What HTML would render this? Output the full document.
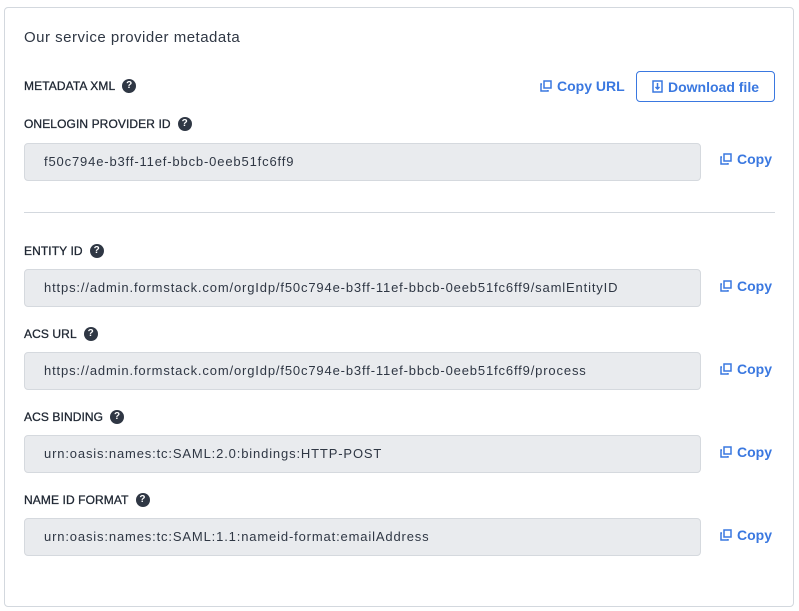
<!DOCTYPE html>
<html><head><style>
*{box-sizing:border-box;margin:0;padding:0}
body{width:799px;height:611px;background:#fff;font-family:"Liberation Sans",sans-serif;position:relative;overflow:hidden;color:#2d3440}
.card{position:absolute;left:4px;top:7px;width:790px;height:600px;border:1px solid #d3d8de;border-radius:4px}
.a{position:absolute}
.title{left:24px;top:29px;font-size:15px;color:#2f3744;letter-spacing:0.5px}
.lbl{font-size:12px;color:#1f2733;display:flex;align-items:center;letter-spacing:.1px;-webkit-text-stroke:0.3px #1f2733}
.q{display:inline-block;width:14px;height:14px;border-radius:50%;background:#2f3744;color:#fff;font-size:10px;font-weight:bold;text-align:center;line-height:14px;margin-left:7px;-webkit-text-stroke:0}
.inp{left:24px;width:677px;height:38px;background:#e9ebee;border:1px solid #d5d9de;border-radius:4px;font-size:13px;line-height:36px;padding-left:19px;color:#2f3744;letter-spacing:0.85px;white-space:nowrap}
.cp{color:#3a78e0;font-weight:bold;font-size:14px;display:flex;align-items:center}
.cp svg{margin-right:5px}
.btn{left:636px;top:71px;width:139px;height:31px;border:1px solid #3a78e0;border-radius:4px;justify-content:center}
.hr{left:24px;top:212px;width:751px;height:1px;background:#d3d8de}
</style></head><body>
<div class="card"></div>
<div class="a title">Our service provider metadata</div>
<div class="a lbl" style="left:24px;top:79px">METADATA XML<span class="q">?</span></div>
<div class="a cp" style="left:540px;top:78px"><svg width="12" height="12" viewBox="0 0 12 12" fill="none" stroke="#3a78e0" stroke-width="1.5"><rect x="4" y="1" width="7" height="7"/><path d="M2 4H1v7h7v-1"/></svg>Copy URL</div>
<div class="a cp btn"><svg width="11" height="13" viewBox="0 0 11 13" fill="none" stroke="#3a78e0" stroke-width="1.5"><rect x="1" y="1" width="9" height="11"/><path d="M5.5 3v6M3.5 7l2 2 2-2"/></svg>Download file</div>
<div class="a lbl" style="left:24px;top:117px">ONELOGIN PROVIDER ID<span class="q">?</span></div>
<div class="a inp" style="top:143px">f50c794e-b3ff-11ef-bbcb-0eeb51fc6ff9</div>
<div class="a cp" style="left:720px;top:151px"><svg width="12" height="12" viewBox="0 0 12 12" fill="none" stroke="#3a78e0" stroke-width="1.5"><rect x="4" y="1" width="7" height="7"/><path d="M2 4H1v7h7v-1"/></svg>Copy</div>
<div class="a hr"></div>
<div class="a lbl" style="left:24px;top:244px">ENTITY ID<span class="q">?</span></div>
<div class="a inp" style="top:269px">https://admin.formstack.com/orgIdp/f50c794e-b3ff-11ef-bbcb-0eeb51fc6ff9/samlEntityID</div>
<div class="a cp" style="left:720px;top:278px"><svg width="12" height="12" viewBox="0 0 12 12" fill="none" stroke="#3a78e0" stroke-width="1.5"><rect x="4" y="1" width="7" height="7"/><path d="M2 4H1v7h7v-1"/></svg>Copy</div>
<div class="a lbl" style="left:24px;top:327px">ACS URL<span class="q">?</span></div>
<div class="a inp" style="top:352px">https://admin.formstack.com/orgIdp/f50c794e-b3ff-11ef-bbcb-0eeb51fc6ff9/process</div>
<div class="a cp" style="left:720px;top:361px"><svg width="12" height="12" viewBox="0 0 12 12" fill="none" stroke="#3a78e0" stroke-width="1.5"><rect x="4" y="1" width="7" height="7"/><path d="M2 4H1v7h7v-1"/></svg>Copy</div>
<div class="a lbl" style="left:24px;top:410px">ACS BINDING<span class="q">?</span></div>
<div class="a inp" style="top:435px">urn:oasis:names:tc:SAML:2.0:bindings:HTTP-POST</div>
<div class="a cp" style="left:720px;top:444px"><svg width="12" height="12" viewBox="0 0 12 12" fill="none" stroke="#3a78e0" stroke-width="1.5"><rect x="4" y="1" width="7" height="7"/><path d="M2 4H1v7h7v-1"/></svg>Copy</div>
<div class="a lbl" style="left:24px;top:493px">NAME ID FORMAT<span class="q">?</span></div>
<div class="a inp" style="top:518px">urn:oasis:names:tc:SAML:1.1:nameid-format:emailAddress</div>
<div class="a cp" style="left:720px;top:527px"><svg width="12" height="12" viewBox="0 0 12 12" fill="none" stroke="#3a78e0" stroke-width="1.5"><rect x="4" y="1" width="7" height="7"/><path d="M2 4H1v7h7v-1"/></svg>Copy</div>
</body></html>
